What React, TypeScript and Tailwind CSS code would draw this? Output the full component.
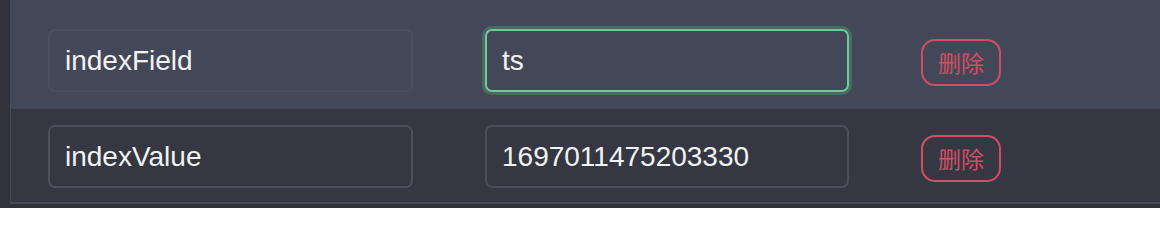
import React from "react";

const font = { fontFamily: '"Liberation Sans", Arial, sans-serif' };

function Row({ field, value, focused, bg, pt, pb }: { field: string; value: string; focused?: boolean; bg: string; pt: string; pb: string }) {
  return (
    <div className={`flex items-start ${bg} ${pt} ${pb} pl-[37px]`}>
      <div className="flex h-[63px] w-[365px] items-center rounded-[7px] border-2 border-[#4a4f5c] pl-[15px] text-[28px] text-[#f2f2f2]">
        {field}
      </div>
      <div
        className={
          focused
            ? "ml-[72px] flex h-[63px] w-[364px] items-center rounded-[7px] border-2 border-[#72c998] pl-[15px] text-[28px] text-[#f2f2f2] shadow-[0_0_0_3px_#4b6a62]"
            : "ml-[72px] flex h-[63px] w-[364px] items-center rounded-[7px] border-2 border-[#4a4f5c] pl-[15px] text-[28px] text-[#f2f2f2]"
        }
      >
        {value}
      </div>
      <button
        className="ml-[72px] mt-[10px] flex h-[47px] w-[80px] items-center justify-center rounded-[14px] border-2 border-[#d24d63] text-[23px] text-[#d24d63]"
        style={{ fontFamily: '"Noto Sans CJK SC", sans-serif' }}
      >
        删除
      </button>
    </div>
  );
}

export default function App() {
  return (
    <div className="h-[208px] w-[1160px] bg-[#30333c] pl-[10px]" style={font}>
      <div className="border-b-2 border-l border-[#454a58]">
        <Row field="indexField" value="ts" focused bg="bg-[#424857]" pt="pt-[29px]" pb="pb-[17px]" />
        <Row field="indexValue" value="1697011475203330" bg="bg-[#353842]" pt="pt-[16px]" pb="pb-[14px]" />
      </div>
    </div>
  );
}
